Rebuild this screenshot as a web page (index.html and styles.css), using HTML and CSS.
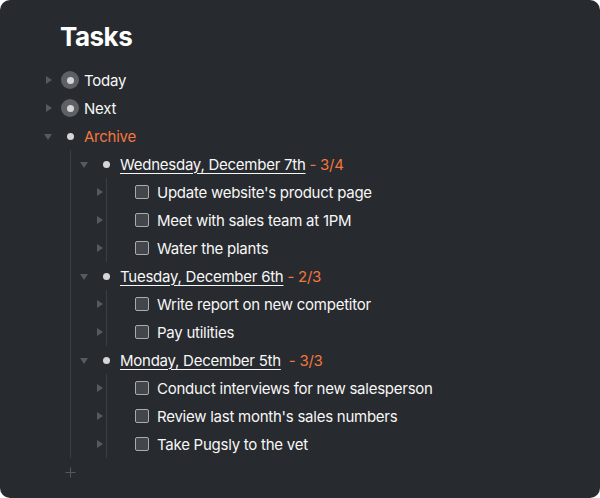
FILE: index.html
```html
<!DOCTYPE html>
<html lang="en">
<head>
<meta charset="utf-8">
<title>Tasks</title>
<link rel="stylesheet" href="styles.css">
</head>
<body>
<div class="app">
  <h1 class="title">Tasks</h1>

  <div class="row l0">
    <span class="toggle"><span class="tri-right"></span></span>
    <span class="bullet ring"><span class="dot"></span></span>
    <span class="text">Today</span>
  </div>
  <div class="row l0">
    <span class="toggle"><span class="tri-right"></span></span>
    <span class="bullet ring"><span class="dot"></span></span>
    <span class="text">Next</span>
  </div>
  <div class="row l0">
    <span class="toggle"><span class="tri-down"></span></span>
    <span class="bullet"><span class="dot"></span></span>
    <span class="text accent">Archive</span>
  </div>

  <div class="children c0">
    <div class="row l1">
      <span class="toggle"><span class="tri-down"></span></span>
      <span class="bullet"><span class="dot"></span></span>
      <span class="text"><span class="date">Wednesday, December 7th</span> <span class="accent">- 3/4</span></span>
    </div>
    <div class="children c1">
      <div class="row l2">
        <span class="toggle"><span class="tri-right"></span></span>
        <span class="check"></span>
        <span class="text">Update website's product page</span>
      </div>
      <div class="row l2">
        <span class="toggle"><span class="tri-right"></span></span>
        <span class="check"></span>
        <span class="text">Meet with sales team at 1PM</span>
      </div>
      <div class="row l2">
        <span class="toggle"><span class="tri-right"></span></span>
        <span class="check"></span>
        <span class="text">Water the plants</span>
      </div>
    </div>

    <div class="row l1">
      <span class="toggle"><span class="tri-down"></span></span>
      <span class="bullet"><span class="dot"></span></span>
      <span class="text"><span class="date">Tuesday, December 6th</span> <span class="accent">- 2/3</span></span>
    </div>
    <div class="children c1">
      <div class="row l2">
        <span class="toggle"><span class="tri-right"></span></span>
        <span class="check"></span>
        <span class="text">Write report on new competitor</span>
      </div>
      <div class="row l2">
        <span class="toggle"><span class="tri-right"></span></span>
        <span class="check"></span>
        <span class="text">Pay utilities</span>
      </div>
    </div>

    <div class="row l1">
      <span class="toggle"><span class="tri-down"></span></span>
      <span class="bullet"><span class="dot"></span></span>
      <span class="text"><span class="date">Monday, December 5th</span>&nbsp; <span class="accent">- 3/3</span></span>
    </div>
    <div class="children c1">
      <div class="row l2">
        <span class="toggle"><span class="tri-right"></span></span>
        <span class="check"></span>
        <span class="text">Conduct interviews for new salesperson</span>
      </div>
      <div class="row l2">
        <span class="toggle"><span class="tri-right"></span></span>
        <span class="check"></span>
        <span class="text">Review last month's sales numbers</span>
      </div>
      <div class="row l2">
        <span class="toggle"><span class="tri-right"></span></span>
        <span class="check"></span>
        <span class="text">Take Pugsly to the vet</span>
      </div>
    </div>
  </div>

  <div class="add-row">
    <svg class="plus" width="11" height="11" viewBox="0 0 11 11">
      <path d="M5.5 0.5V10.5M0.5 5.5H10.5" stroke="#55585c" stroke-width="1" fill="none"/>
    </svg>
  </div>
</div>
</body>
</html>
```

FILE: styles.css
```css
* { box-sizing: border-box; }

html, body {
  margin: 0;
  padding: 0;
  background: #ffffff;
}

.app {
  width: 600px;
  height: 498px;
  background: #272a2e;
  border-radius: 10px;
  overflow: hidden;
  font-family: Inter, "Noto Sans", "Liberation Sans", sans-serif;
  color: #f7f7f7;
  padding-top: 20px;
}

.title {
  margin: 0 0 12px 60px;
  font-size: 26px;
  line-height: 34px;
  font-weight: 700;
  color: #ffffff;
  letter-spacing: -0.5px;
}

.row {
  height: 28px;
  display: flex;
  align-items: center;
  font-size: 15px;
}

.text {
  white-space: nowrap;
  letter-spacing: -0.25px;
}

.accent { color: #f4763e; }

.date {
  text-decoration: underline;
  text-decoration-thickness: 1px;
  text-underline-offset: 3px;
}

.toggle {
  width: 16px;
  height: 16px;
  display: flex;
  align-items: center;
  justify-content: center;
  flex: none;
}

.tri-right {
  width: 0;
  height: 0;
  border-top: 4px solid transparent;
  border-bottom: 4px solid transparent;
  border-left: 6px solid #575a5e;
  margin-left: 1px;
}

.tri-down {
  width: 0;
  height: 0;
  border-left: 4px solid transparent;
  border-right: 4px solid transparent;
  border-top: 6px solid #575a5e;
  margin-top: 1px;
}

.bullet {
  width: 18px;
  height: 18px;
  border-radius: 50%;
  display: flex;
  align-items: center;
  justify-content: center;
  flex: none;
}

.bullet.ring { background: #5d6064; }

.dot {
  width: 7px;
  height: 7px;
  border-radius: 50%;
  background: #d6d6d6;
}

/* level 0 */
.l0 { padding-left: 40px; }
.l0 .bullet { margin-left: 5px; }
.l0 .text { margin-left: 5px; }

/* children of archive */
.children.c0 {
  margin-left: 70px;
  border-left: 1px solid #3b3e42;
}

.l1 { padding-left: 5px; }
.l1 .bullet { margin-left: 5px; }
.l1 .text { margin-left: 5px; }

.children.c1 {
  margin-left: 35px;
  border-left: 1px solid #3b3e42;
}

.l2 .toggle { margin-left: -16px; }

.check {
  width: 14px;
  height: 14px;
  margin-left: 28px;
  border: 1.5px solid #a9abad;
  border-radius: 2px;
  background: #43464a;
  flex: none;
}

.l2 .text { margin-left: 8px; }

.add-row {
  height: 28px;
  display: flex;
  align-items: center;
  padding-left: 65px;
}

.plus { display: block; }
```
